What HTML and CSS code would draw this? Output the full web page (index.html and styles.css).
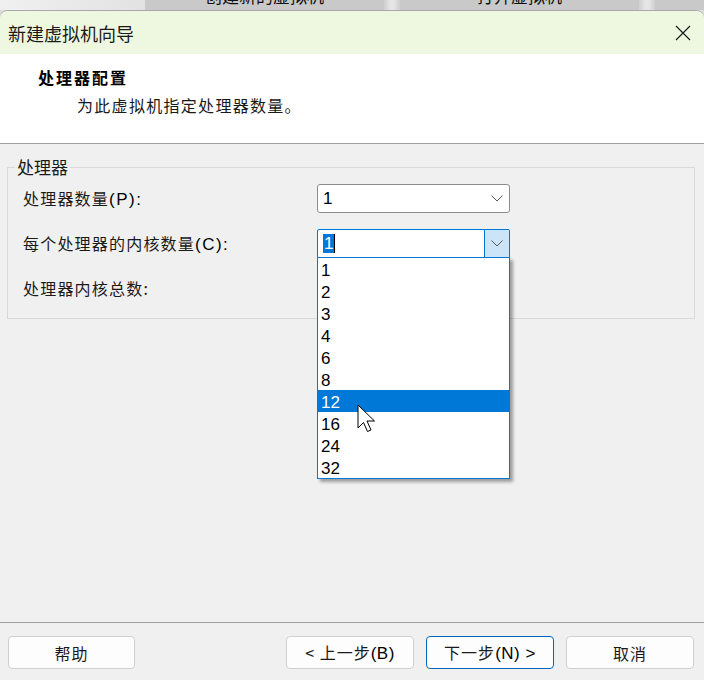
FILE: index.html
```html
<!DOCTYPE html>
<html lang="zh-CN">
<head>
<meta charset="utf-8">
<title>新建虚拟机向导</title>
<link rel="stylesheet" href="styles.css">
</head>
<body>
<div class="strip">
  <div class="strip-left"></div>
  <div class="tb-btn"><span>创建新的虚拟机</span></div>
  <div class="strip-gap"></div>
  <div class="tb-btn"><span>打开虚拟机</span></div>
  <div class="strip-gap"></div>
  <div class="tb-btn tb-last"></div>
</div>
<div class="dialog">
  <div class="titlebar">
    <span class="title">新建虚拟机向导</span>
    <svg class="close" width="16" height="16" viewBox="0 0 16 16"><path d="M1 1 L15 15 M15 1 L1 15" stroke="#1b1b1b" stroke-width="1.2" fill="none"/></svg>
  </div>
  <div class="header">
    <div class="h-title">处理器配置</div>
    <div class="h-sub">为此虚拟机指定处理器数量。</div>
  </div>
  <div class="body">
    <fieldset class="group">
      <legend class="legend">处理器</legend>
      <div class="row row1">
        <span class="label">处理器数量<span class="acc">(P):</span></span>
        <div class="combo">
          <span class="val">1</span>
          <span class="arrow"><svg width="12" height="7" viewBox="0 0 12 7"><polyline points="0.5,0.5 6,6 11.5,0.5" fill="none" stroke="#5a5a5a" stroke-width="1"/></svg></span>
        </div>
      </div>
      <div class="row row2">
        <span class="label">每个处理器的内核数量<span class="acc">(C):</span></span>
        <div class="combo combo-open">
          <span class="val"><span class="sel">1</span><span class="caret"></span></span>
          <span class="arrow arrow-open"><svg width="12" height="7" viewBox="0 0 12 7"><polyline points="0.5,0.5 6,6 11.5,0.5" fill="none" stroke="#5a5a5a" stroke-width="1"/></svg></span>
          <ul class="list">
            <li>1</li><li>2</li><li>3</li><li>4</li><li>6</li><li>8</li>
            <li class="hl">12</li><li>16</li><li>24</li><li>32</li>
          </ul>
        </div>
      </div>
      <div class="row row3">
        <span class="label">处理器内核总数:</span>
      </div>
    </fieldset>
  </div>
  <div class="footer">
    <button class="btn">帮助</button>
    <div class="spacer"></div>
    <button class="btn">&lt; 上一步<span class="acc">(B)</span></button>
    <button class="btn btn-default">下一步<span class="acc">(N) &gt;</span></button>
    <button class="btn">取消</button>
  </div>
</div>
<svg class="cursor" width="19" height="29" viewBox="0 0 19 29"><path d="M1 1 V24 L6.5 18.5 L10.5 27.5 L14 26 L10 17 H17.5 Z" fill="#ffffff" stroke="#000000" stroke-width="1" stroke-linejoin="round"/></svg>
</body>
</html>
```
FILE: styles.css
```css
* { box-sizing: border-box; }
html, body { margin: 0; padding: 0; }
body {
  width: 704px;
  height: 680px;
  overflow: hidden;
  background: #dcdcdc;
  font-family: "Noto Sans CJK SC", "Noto Sans", sans-serif;
  color: #1a1a1a;
  position: relative;
}
.strip {
  height: 10px;
  display: flex;
  overflow: hidden;
  background: linear-gradient(#e4e4e4, #d4d4d4);
}
.strip-left { width: 145px; background: linear-gradient(90deg, #f0f0f0, #e2e2e2); }
.tb-btn {
  width: 239px;
  background: #c9c9c9;
  text-align: center;
  overflow: hidden;
  font-size: 17px;
  line-height: 20px;
}
.tb-btn span { display: block; margin-top: -14px; color: #111; }
.tb-last { flex: 1; }
.strip-gap { width: 16px; background: linear-gradient(90deg, #d0d0d0, #e6e6e6 40%, #e6e6e6 60%, #d0d0d0); }

.dialog {
  height: 670px;
  display: flex;
  flex-direction: column;
  border-radius: 8px 8px 0 0;
  overflow: hidden;
  border-top: 1px solid #a8a8a8;
  background: #f0f0f0;
}
.titlebar {
  height: 43px;
  flex: none;
  background: #eef8e0;
  display: flex;
  align-items: center;
  justify-content: space-between;
  padding: 0 13px 0 8px;
}
.title { font-size: 18px; line-height: 22px; color: #1a1a1a; }
.close { display: block; }

.header {
  height: 90px;
  flex: none;
  background: #ffffff;
  border-bottom: 1px solid #a0a0a0;
  padding-top: 12px;
}
.h-title { margin-left: 38px; font-size: 16px; font-weight: bold; line-height: 22px; letter-spacing: 2px; color: #000; }
.h-sub { margin-left: 77px; margin-top: 6px; font-size: 16px; line-height: 22px; letter-spacing: 1.3px; color: #1a1a1a; }

.body {
  flex: 1;
  padding: 13px 9px 0 7px;
}
.group {
  margin: 0;
  border: 1px solid #d9d9d9;
  padding: 7px 0 16px 15px;
  min-inline-size: 0;
}
.legend {
  padding: 0 2px;
  margin-left: -8px;
  font-size: 17px;
  line-height: 20px;
  color: #1a1a1a;
}
.row {
  display: grid;
  grid-template-columns: 294px 193px;
  align-items: center;
  height: 29px;
}
.row2 { margin-top: 16px; }
.row3 { margin-top: 15px; }
.label { font-size: 16px; line-height: 20px; letter-spacing: 1.2px; color: #1a1a1a; }
.acc { font-family: "Liberation Sans", Arial, sans-serif; font-size: 17px; letter-spacing: 1.5px; color: #000; }

.combo {
  position: relative;
  height: 29px;
  display: flex;
  align-items: center;
  background: #fff;
  border: 1px solid #8c8c8c;
  border-radius: 3px;
}
.val {
  flex: 1;
  display: flex;
  align-items: center;
  padding-left: 5px;
  font-family: "Liberation Sans", Arial, sans-serif;
  font-size: 17px;
  line-height: 20px;
  color: #000;
}
.arrow {
  width: 25px;
  height: 100%;
  display: flex;
  align-items: center;
  justify-content: center;
}
.arrow svg { display: block; }
.combo-open { border-color: #0078d7; border-radius: 2px 2px 0 0; }
.arrow-open { background: #cce4f7; border-left: 1px solid #0078d7; }
.sel { background: #0078d7; color: #fff; padding: 0 1px; line-height: 19px; }
.caret { width: 1px; height: 19px; background: #000; }

.list {
  position: absolute;
  top: 100%;
  left: -1px;
  width: 193px;
  margin: 0;
  padding: 0;
  list-style: none;
  background: #fff;
  border: 1px solid #0078d7;
  box-shadow: 3px 3px 3px rgba(0,0,0,0.35);
  z-index: 5;
}
.list li {
  height: 22px;
  line-height: 19px;
  padding-top: 3px;
  padding-left: 3px;
  font-family: "Liberation Sans", Arial, sans-serif;
  font-size: 17px;
  color: #000;
}
.list li.hl { background: #0078d7; color: #fff; }

.footer {
  height: 58px;
  flex: none;
  border-top: 1px solid #a0a0a0;
  display: flex;
  align-items: flex-start;
  gap: 12px;
  padding: 13px 10px 0 8px;
}
.spacer { flex: 1; }
.btn {
  width: 128px;
  height: 33px;
  background: #fdfdfd;
  border: 1px solid #d0d0d0;
  border-radius: 4px;
  font-family: "Noto Sans CJK SC", sans-serif;
  font-size: 16px;
  line-height: 20px;
  letter-spacing: 1px;
  color: #1a1a1a;
  padding: 0;
}
.btn:first-child { width: 127px; }
.btn-default { border-color: #0067c0; }
.btn .acc { letter-spacing: 0.5px; }

.cursor { position: absolute; left: 357px; top: 404px; z-index: 10; }
```
